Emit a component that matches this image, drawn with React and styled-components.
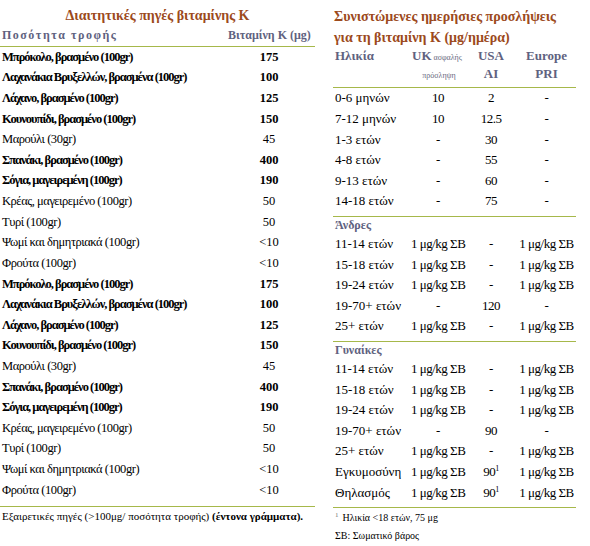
import React from "react";
import styled, { createGlobalStyle } from "styled-components";

const GlobalStyle = createGlobalStyle`
  body {
    margin: 0;
    background: #ffffff;
    color: #000000;
  }
`;

const SERIF = `"Liberation Serif", "Tinos", "DejaVu Serif", serif`;
const BROWN = "#9c4a1c";
const SLATE = "#5f6280";
const OLIVE = "#a6b84a";

const Page = styled.div`
  display: flex;
  align-items: flex-start;
  width: 590px;
  height: 546px;
  font-family: ${SERIF};
`;

const LeftPanel = styled.section`
  width: 315px;
  display: flex;
  flex-direction: column;
`;

const RightPanel = styled.section`
  width: 243px;
  margin-left: 18px;
  display: flex;
  flex-direction: column;
`;

const Title = styled.h2`
  margin: 0;
  padding-top: 6px;
  font-family: ${SERIF};
  font-size: 14px;
  line-height: ${(p) => p.$lh || "20px"};
  font-weight: bold;
  color: ${BROWN};
  text-align: ${(p) => p.$align || "center"};
  padding-left: ${(p) => p.$indent || "0"};
`;

const Rule = styled.div`
  height: 1px;
  background: ${OLIVE};
  margin-top: ${(p) => p.$gap || 0}px;
`;

const FoodRow = styled.div`
  display: grid;
  grid-template-columns: 1fr 82px;
  align-items: center;
  height: ${(p) => p.$h || 20.62}px;
  padding: 0 5px 0 2px;
  font-size: ${(p) => (p.$head ? 12 : 12.5)}px;
  font-weight: ${(p) => (p.$strong ? "bold" : "normal")};
  color: ${(p) => (p.$head ? SLATE : "#000")};
  white-space: nowrap;
  span:first-child {
    letter-spacing: ${(p) => (p.$head ? "1.5px" : p.$strong ? "-1px" : "-0.45px")};
  }
  span:last-child {
    text-align: center;
  }
`;

const LeftNote = styled.p`
  margin: 0;
  padding-left: 2px;
  font-size: 11px;
  line-height: 18px;
  white-space: nowrap;
`;

const IntakeRow = styled.div`
  display: grid;
  grid-template-columns: 78px 54px 52px 59px;
  align-items: center;
  height: ${(p) => p.$h || 20.62}px;
  font-size: 13px;
  white-space: nowrap;
  color: ${(p) => (p.$head ? SLATE : "#000")};
  font-weight: ${(p) => (p.$head ? "bold" : "normal")};
  span {
    text-align: center;
    letter-spacing: ${(p) => (p.$head ? "0" : "-0.5px")};
  }
  span:first-child {
    text-align: left;
    padding-left: 2px;
    letter-spacing: 0;
  }
`;

const UkCell = styled.span`
  && {
    text-align: left;
    padding-left: 1px;
  }
  small {
    font-size: 8px;
    font-weight: normal;
    margin-left: 2px;
    color: #6a6a80;
  }
`;

const Tiny = styled.span`
  font-size: 8px;
  font-weight: normal;
  color: #6a6a80;
`;

const Group = styled.div`
  height: 17px;
  display: flex;
  align-items: center;
  padding-left: 2px;
  font-size: 12px;
  font-weight: bold;
  color: ${SLATE};
`;

const Sup = styled.sup`
  font-size: 8px;
  vertical-align: 5px;
  line-height: 0;
`;

const Footnote = styled.p`
  margin: 0;
  padding-left: 2px;
  font-size: 10px;
  line-height: ${(p) => p.$lh || "14px"};
  white-space: nowrap;
  sup {
    color: #777;
    font-size: 7px;
    vertical-align: 4px;
    margin-right: 4px;
  }
`;

const foods = [
  ["Μπρόκολο, βρασμένο (100gr)", "175", true],
  ["Λαχανάκια Βρυξελλών, βρασμένα (100gr)", "100", true],
  ["Λάχανο, βρασμένο (100gr)", "125", true],
  ["Κουνουπίδι, βρασμένο (100gr)", "150", true],
  ["Μαρούλι (30gr)", "45", false],
  ["Σπανάκι, βρασμένο (100gr)", "400", true],
  ["Σόγια, μαγειρεμένη (100gr)", "190", true],
  ["Κρέας, μαγειρεμένο (100gr)", "50", false],
  ["Τυρί (100gr)", "50", false],
  ["Ψωμί και δημητριακά (100gr)", "<10", false],
  ["Φρούτα (100gr)", "<10", false],
];

const kids = [
  ["0-6 μηνών", "10", "2", "-"],
  ["7-12 μηνών", "10", "12.5", "-"],
  ["1-3 ετών", "-", "30", "-"],
  ["4-8 ετών", "-", "55", "-"],
  ["9-13 ετών", "-", "60", "-"],
  ["14-18 ετών", "-", "75", "-"],
];

const BW = "1 μg/kg ΣΒ";

const men = [
  ["11-14 ετών", BW, "-", BW],
  ["15-18 ετών", BW, "-", BW],
  ["19-24 ετών", BW, "-", BW],
  ["19-70+ ετών", "-", "120", "-"],
  ["25+ ετών", BW, "-", BW],
];

const women = [
  ["11-14 ετών", BW, "-", BW],
  ["15-18 ετών", BW, "-", BW],
  ["19-24 ετών", BW, "-", BW],
  ["19-70+ ετών", "-", "90", "-"],
  ["25+ ετών", BW, "-", BW],
  ["Εγκυμοσύνη", BW, "901", BW],
  ["Θηλασμός", BW, "901", BW],
];

const renderValue = (v) =>
  v === "901" ? (
    <>
      90<Sup>1</Sup>
    </>
  ) : (
    v
  );

const IntakeRows = ({ rows }) =>
  rows.map((r, i) => (
    <IntakeRow key={i}>
      {r.map((c, j) => (
        <span key={j}>{renderValue(c)}</span>
      ))}
    </IntakeRow>
  ));

export default function App() {
  const allFoods = [...foods, ...foods];
  return (
    <>
      <GlobalStyle />
      <Page>
        <LeftPanel>
          <Title>Διαιτητικές πηγές βιταμίνης Κ</Title>
          <FoodRow $head $strong $h={18}>
            <span>Ποσότητα τροφής</span>
            <span>Βιταμίνη Κ (μg)</span>
          </FoodRow>
          <Rule $gap={2} />
          {allFoods.map(([name, value, strong], i) => (
            <FoodRow key={i} $strong={strong}>
              <span>{name}</span>
              <span>{value}</span>
            </FoodRow>
          ))}
          <Rule $gap={6} />
          <LeftNote>
            Εξαιρετικές πηγές (&gt;100μg/ ποσότητα τροφής){" "}
            <b>(έντονα γράμματα).</b>
          </LeftNote>
        </LeftPanel>

        <RightPanel>
          <Title $align="left" $indent="1px" $lh="21px">
            Συνιστώμενες ημερήσιες προσλήψεις
            <br />
            για τη βιταμίνη Κ (μg/ημέρα)
          </Title>
          <IntakeRow $head $h={15}>
            <span>Ηλικία</span>
            <UkCell>
              UK<small>ασφαλής</small>
            </UkCell>
            <span>USA</span>
            <span>Europe</span>
          </IntakeRow>
          <IntakeRow $head $h={21}>
            <span></span>
            <span>
              <Tiny>πρόσληψη</Tiny>
            </span>
            <span>AI</span>
            <span>PRI</span>
          </IntakeRow>
          <Rule $gap={3} />
          <IntakeRows rows={kids} />
          <Rule $gap={4} />
          <Group>Άνδρες</Group>
          <IntakeRows rows={men} />
          <Rule $gap={4} />
          <Group>Γυναίκες</Group>
          <IntakeRows rows={women} />
          <Rule $gap={4} />
          <Footnote>
            <sup>1</sup>Ηλικία &lt;18 ετών, 75 μg
          </Footnote>
          <Footnote $lh="22px">ΣΒ: Σωματικό βάρος</Footnote>
        </RightPanel>
      </Page>
    </>
  );
}
